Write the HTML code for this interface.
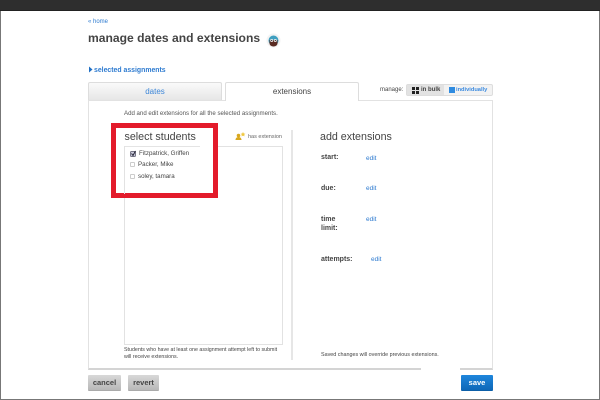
<!DOCTYPE html>
<html><head><meta charset="utf-8"><style>
html,body{margin:0;padding:0;background:#fff}
#p{position:relative;width:600px;height:400px;overflow:hidden;background:#fff;font-family:"Liberation Sans",sans-serif;color:#444}
#p div{position:absolute;box-sizing:border-box;white-space:nowrap}
.t{line-height:10px;height:10px}
.b{color:#2e7bd0}
.lbl{font-weight:bold;font-size:7px;color:#444}
.e{font-size:6.5px;color:#2e7bd0}
.btn{top:375px;height:16px;border-radius:1px;background:linear-gradient(#d8d8d8,#b8b8b8);border-bottom:1px solid #aaa;color:#444;font-weight:bold;font-size:7.5px;line-height:15px;text-align:center}
</style></head><body><div id="p">
<div style="left:0;top:0;width:600px;height:11px;background:#2e2e2e;border-bottom:1px solid #222"></div>
<div style="left:0;top:11px;width:1px;height:389px;background:#777"></div>
<div style="right:0;top:11px;width:1px;height:389px;background:#777"></div>
<div style="left:0;top:399px;width:600px;height:1px;background:#777"></div>

<div class="t b" style="left:88px;top:17px;font-size:6px">« home</div>
<div class="t" style="left:88px;top:33px;font-size:12.100px;font-weight:bold;color:#444">manage dates and extensions</div>
<svg style="position:absolute;left:266px;top:33px" width="15" height="15" viewBox="0 0 15 15"><circle cx="7.5" cy="7.5" r="7" fill="#f3f3f3"/><circle cx="7.5" cy="7.5" r="5" fill="#3f9fc0"/><path d="M3.5 7h8v3.5a4 3 0 0 1-8 0z" fill="#5a2b22"/><circle cx="5.7" cy="7.5" r="1.5" fill="#eee"/><circle cx="9.3" cy="7.5" r="1.5" fill="#eee"/><circle cx="5.7" cy="7.5" r=".6" fill="#222"/><circle cx="9.3" cy="7.5" r=".6" fill="#222"/></svg>

<svg style="position:absolute;left:88px;top:66px" width="5" height="7"><path d="M1 0.5L4.5 3.5L1 6.5z" fill="#1f6fc4"/></svg>
<div class="t b" style="left:94px;top:66px;font-size:6.900px;font-weight:bold">selected assignments</div>

<div style="left:88px;top:82px;width:134px;height:19px;background:linear-gradient(#fafafa,#e6e6e6);border:1px solid #ddd;border-radius:2px 2px 0 0;border-bottom:1px solid #ccc;color:#3c86d8;font-size:8px;line-height:17px;text-align:center">dates</div>
<div style="left:88px;top:100px;width:405px;height:270px;border:1px solid #e2e2e2;border-bottom:2px solid #d4d4d4;background:#fff"></div>
<div style="left:225px;top:82px;width:134px;height:19px;background:#fff;border:1px solid #ddd;border-bottom:0;border-radius:2px 2px 0 0;color:#444;font-size:8px;line-height:17px;text-align:center">extensions</div>
<div style="left:421px;top:368px;width:39px;height:3px;background:#fff"></div>

<div class="t" style="left:380px;top:85px;font-size:6px;color:#444">manage:</div>
<div style="left:406px;top:84px;width:87px;height:12px;border:1px solid #ddd;border-radius:2px;background:#f2f2f2"></div>
<div style="left:407px;top:85px;width:37px;height:10px;background:#e2e2e2"></div>
<div style="left:412px;top:87px;width:3px;height:3px;background:#222"></div>
<div style="left:416px;top:87px;width:3px;height:3px;background:#222"></div>
<div style="left:412px;top:91px;width:3px;height:3px;background:#222"></div>
<div style="left:416px;top:91px;width:3px;height:3px;background:#222"></div>
<div class="t" style="left:421px;top:85px;font-size:6px;font-weight:bold;color:#444">in bulk</div>
<div style="left:449px;top:87px;width:6px;height:6px;background:#2f8be0"></div>
<div class="t" style="left:456px;top:85px;font-size:5.700px;font-weight:bold;color:#3c8be0">individually</div>

<div class="t" style="left:124px;top:109px;font-size:6.100px;color:#555">Add and edit extensions for all the selected assignments.</div>

<div style="left:124px;top:146px;width:159px;height:199px;border:1px solid #e2e2e2"></div>
<div style="left:291px;top:130px;width:2px;height:230px;background:#e6e6e6"></div>

<div style="left:111px;top:123px;width:107px;height:75px;border:5px solid #e31b2b;background:#fff"></div>
<div class="t" style="left:124.500px;top:132px;font-size:10.700px;color:#444">select students</div>
<div style="left:124px;top:146px;width:76px;height:1px;background:#e4e4e4"></div>
<div style="left:124px;top:146px;width:1px;height:48px;background:#e2e2e2"></div>
<svg style="position:absolute;left:130px;top:150px" width="6" height="7"><rect x=".5" y="1.5" width="5" height="5" rx="1" fill="#ccd" stroke="#778"/><path d="M1.500 3.500L3 5.500L5.500 1" fill="none" stroke="#223" stroke-width="1"/></svg>
<div class="t" style="left:139px;top:149px;font-size:6.200px;color:#444">Fitzpatrick, Griffen</div>
<div style="left:130px;top:162px;width:5px;height:5px;border:1px solid #ccc;border-radius:1px"></div>
<div class="t" style="left:138px;top:160px;font-size:6.200px;color:#444">Packer, Mike</div>
<div style="left:130px;top:174px;width:5px;height:5px;border:1px solid #ccc;border-radius:1px"></div>
<div class="t" style="left:138px;top:172px;font-size:6.200px;color:#444">soley, tamara</div>

<svg style="position:absolute;left:235px;top:132px" width="11" height="9"><circle cx="3.500" cy="3.500" r="1.800" fill="#d9a81e"/><path d="M0.500 8c0-2 1.500-3 3-3s3 1 3 3z" fill="#d9a81e"/><path d="M8 0l.8 1.500 1.600.2-1.200 1.100.3 1.600L8 3.600l-1.500.8.300-1.600L5.600 1.700l1.600-.2z" fill="#f0c840"/></svg>
<div class="t" style="left:248px;top:132px;font-size:5.500px;color:#666">has extension</div>

<div class="t" style="left:320px;top:132px;font-size:10.700px;color:#444">add extensions</div>
<div class="t lbl" style="left:321px;top:153px">start:</div>
<div class="t e" style="left:366px;top:154px">edit</div>
<div class="t lbl" style="left:321px;top:184px">due:</div>
<div class="t e" style="left:366px;top:184px">edit</div>
<div class="t lbl" style="left:321px;top:215px">time</div>
<div class="t lbl" style="left:321px;top:224px">limit:</div>
<div class="t e" style="left:366px;top:215px">edit</div>
<div class="t lbl" style="left:321px;top:255px">attempts:</div>
<div class="t e" style="left:371px;top:255px">edit</div>

<div class="t" style="left:124px;top:345px;font-size:5.300px;color:#444">Students who have at least one assignment attempt left to submit</div>
<div class="t" style="left:124px;top:352px;font-size:5.300px;color:#444">will receive extensions.</div>
<div class="t" style="left:321px;top:350px;font-size:5.400px;color:#444">Saved changes will override previous extensions.</div>

<div class="btn" style="left:88px;width:33px">cancel</div>
<div class="btn" style="left:128px;width:31px">revert</div>
<div class="btn" style="left:461px;width:32px;background:linear-gradient(#1f86dc,#0e68b8);border-bottom-color:#0c5fa8;color:#fff">save</div>
</div></body></html>
